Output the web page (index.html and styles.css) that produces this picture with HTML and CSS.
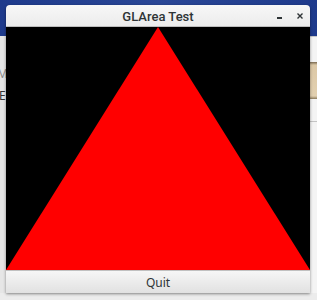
FILE: index.html
```html
<!DOCTYPE html>
<html>
<head>
<meta charset="utf-8">
<link rel="stylesheet" href="styles.css">
</head>
<body>
<div class="desktop">
  <div class="bg-top"></div>
  <div class="bg-left"><span class="bl-m">M</span><span class="bl-e">E</span></div>
  <div class="bg-right"><div class="br-tan"></div><div class="br-mark"></div></div>
  <div class="bg-bottom"></div>
  <div class="window">
    <div class="titlebar">
      <span class="title">GLArea Test</span>
      <span class="btn-min"></span>
      <svg class="btn-close" viewBox="0 0 6 6" width="6" height="6"><path d="M0.5 0.5 L5.5 5.5 M5.5 0.5 L0.5 5.5" stroke="#2e3436" stroke-width="1.4"/></svg>
    </div>
    <div class="glarea">
      <svg viewBox="0 0 304 243" preserveAspectRatio="none" class="tri">
        <polygon points="152,0 304,243 0,243" fill="#ff0000"/>
      </svg>
    </div>
    <div class="quit">Quit</div>
  </div>
</div>
</body>
</html>
```
FILE: styles.css
```css
html, body { margin: 0; padding: 0; }
body { width: 317px; height: 300px; overflow: hidden; font-family: "Noto Sans", "DejaVu Sans", sans-serif; }
.desktop { position: relative; width: 317px; height: 300px; background: #e9e9e9; }
.bg-top { position: absolute; left: 0; top: 0; width: 317px; height: 36px; background: linear-gradient(90deg, #1e3a8c, #2a4796 50%, #1e3a8c); }
.bg-left { position: absolute; left: 0; top: 36px; width: 6px; height: 264px; background: #e6e6e6; overflow: hidden; color: #8a8a8a; font-size: 12px; }
.bl-m { position: absolute; left: -3px; top: 29px; }
.bl-e { position: absolute; left: -1px; top: 51px; color: #333; }
.bg-right { position: absolute; left: 310px; top: 36px; width: 7px; height: 264px; background: #f4f4f4; border-top: 1px solid #c8c8c8; }
.br-tan { position: absolute; left: 0; top: 25px; width: 7px; height: 37px; background: linear-gradient(#7a6a50, #dcc8a6 3px, #e2d0b0 34px, #8a7a5c); }
.br-mark { position: absolute; left: 0; top: 84px; width: 7px; height: 1px; background: #c4c4c4; }
.bg-bottom { position: absolute; left: 0; top: 293px; width: 317px; height: 7px; background: #ececec; }
.window { position: absolute; left: 6px; top: 5px; width: 304px; height: 288px; display: flex; flex-direction: column; box-shadow: 0 1px 3px rgba(0,0,0,0.45); border-radius: 4px 4px 0 0; overflow: hidden; }
.titlebar { position: relative; height: 21px; flex: none; background: linear-gradient(#f7f7f7, #ececec); border-bottom: 1px solid #bdbdbd; display: flex; align-items: center; justify-content: center; }
.title { font-family: Roboto, "Noto Sans", sans-serif; font-size: 13px; font-weight: 500; color: #2e3436; line-height: 1; margin-top: 1px; }
.btn-min { position: absolute; left: 271px; top: 12px; width: 5px; height: 2px; background: #2e3436; }
.btn-close { position: absolute; left: 291px; top: 8px; }
.glarea { height: 243px; flex: none; background: #000; }
.tri { display: block; width: 304px; height: 243px; }
.quit { height: 23px; flex: none; background: linear-gradient(#f6f6f6, #e1e1e1); border-top: 1px solid #c0c0c0; box-sizing: border-box; display: flex; align-items: center; justify-content: center; font-size: 12px; color: #2e3436; }
```
